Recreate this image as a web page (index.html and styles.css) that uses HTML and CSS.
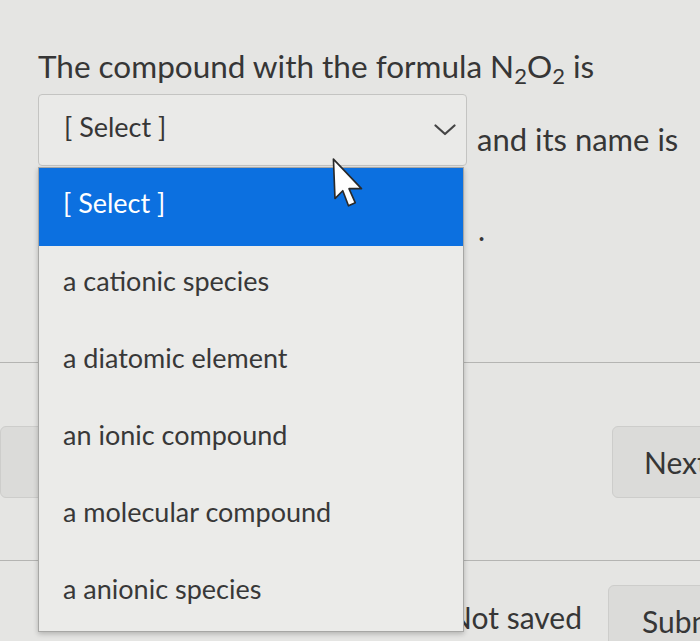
FILE: index.html
```html
<!DOCTYPE html>
<html lang="en">
<head>
<meta charset="utf-8">
<title>Question</title>
<link rel="stylesheet" href="styles.css">
</head>
<body>
<main class="page">
  <p class="question">The compound with the formula N<sub>2</sub>O<sub>2</sub> is</p>

  <div class="answer-row">
    <div class="select-wrap">
      <div class="select">
        <span class="select-label">[ Select ]</span>
        <svg class="chevron" width="22" height="12" viewBox="0 0 22 12" aria-hidden="true">
          <polyline points="1.5,1.5 11,10 20.5,1.5" fill="none" stroke="#444" stroke-width="2.2" stroke-linecap="round" stroke-linejoin="round"/>
        </svg>
      </div>
      <ul class="menu">
        <li class="active">[ Select ]</li>
        <li>a cationic species</li>
        <li>a diatomic element</li>
        <li>an ionic compound</li>
        <li>a molecular compound</li>
        <li>a anionic species</li>
      </ul>
      <svg class="pointer" width="36" height="54" viewBox="-2 -2 34 52" aria-hidden="true">
        <path d="M0 0 L1.5 38 L9 30.5 L14.5 45 L21 42 L15 28.5 L27 28.5 Z" fill="#fff" stroke="#2a2a2a" stroke-width="1.6" stroke-linejoin="round"/>
      </svg>
    </div>
    <span class="after">and its name is</span>
  </div>

  <div class="line2">
    <div class="select second"></div>
    <span class="dot">.</span>
  </div>

  <div class="rule rule-top"></div>

  <div class="nav-row">
    <button class="btn prev" aria-label="Previous"></button>
    <button class="btn next">Next</button>
  </div>

  <div class="rule rule-bottom"></div>

  <div class="submit-row">
    <span class="status">Not saved</span>
    <button class="btn submit">Submit Quiz</button>
  </div>
</main>
</body>
</html>
```

FILE: styles.css
```css
html, body {
  margin: 0;
  padding: 0;
}

body {
  width: 700px;
  height: 641px;
  overflow: hidden;
  background: #e5e5e3;
  color: #363636;
  font-family: Lato, "Open Sans", "Liberation Sans", sans-serif;
}

.page {
  width: 700px;
}

.question {
  margin: 0;
  padding: 48px 0 0 38px;
  font-size: 31.5px;
  line-height: 36px;
  white-space: nowrap;
}

.question sub {
  font-size: 22px;
  line-height: 0;
  vertical-align: -6px;
}

.answer-row {
  display: flex;
  align-items: flex-start;
  margin-top: 10px;
  padding-left: 38px;
}

.select-wrap {
  position: relative;
  width: 429px;
  flex: none;
}

.select {
  box-sizing: border-box;
  height: 72px;
  display: flex;
  align-items: center;
  justify-content: space-between;
  padding: 0 10px 0 25px;
  background: #eaeae8;
  border: 1px solid #c4c4c2;
  border-radius: 4px;
  font-size: 27px;
}

.select-label {
  padding-bottom: 8px;
}

.chevron {
  display: block;
}

.menu {
  position: absolute;
  top: 73px;
  left: 0;
  z-index: 2;
  width: 424px;
  margin: 0;
  padding: 0;
  list-style: none;
  background: #ebebe9;
  border: 1px solid #a7a7a5;
  box-shadow: 0 2px 5px rgba(0, 0, 0, 0.22);
}

.menu li {
  box-sizing: border-box;
  height: 77px;
  display: flex;
  align-items: center;
  padding: 0 0 9px 24px;
  font-size: 27px;
  color: #383838;
}

.menu li.active {
  height: 78px;
  background: #0c70e0;
  color: #ffffff;
}

.pointer {
  position: absolute;
  left: 293px;
  top: 63px;
  z-index: 3;
}

.after {
  margin: 28px 0 0 10px;
  font-size: 31px;
  line-height: 34px;
  white-space: nowrap;
}

.line2 {
  display: flex;
  align-items: flex-end;
  margin-top: 8px;
  padding-left: 38px;
}

.select.second {
  width: 420px;
}

.dot {
  margin-left: 20px;
  font-size: 30px;
  line-height: 30px;
  padding-bottom: 2px;
}

.rule {
  height: 0;
  border-top: 1px solid #b4b4b2;
}

.rule-top {
  margin-top: 116px;
}

.nav-row {
  display: flex;
  justify-content: space-between;
  padding-top: 63px;
  height: 72px;
  margin-right: -48px;
  margin-bottom: 62px;
}

.btn {
  box-sizing: border-box;
  height: 72px;
  padding: 0 0 0 33px;
  text-align: left;
  background: #dbdbd9;
  border: 1px solid #cdcdcb;
  border-radius: 6px;
  color: #363636;
  font-family: Lato, "Open Sans", "Liberation Sans", sans-serif;
  font-size: 30px;
  white-space: nowrap;
  overflow: hidden;
}

.prev {
  width: 200px;
}

.next {
  width: 136px;
  padding-left: 31px;
}

.submit-row {
  display: flex;
  justify-content: flex-end;
  align-items: flex-start;
  padding-top: 24px;
  margin-right: -110px;
}

.status {
  padding-top: 15px;
  margin-right: 26px;
  font-size: 30px;
  line-height: 34px;
  white-space: nowrap;
}

.submit {
  width: 202px;
}
```
